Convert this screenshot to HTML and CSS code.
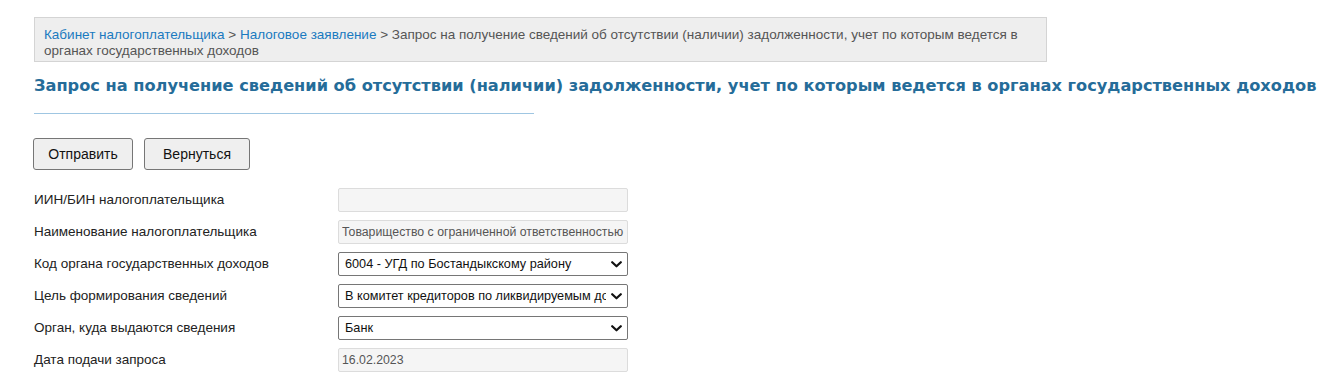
FILE: index.html
```html
<!DOCTYPE html>
<html lang="ru">
<head>
<meta charset="utf-8">
<title>Запрос на получение сведений</title>
<link rel="stylesheet" href="styles.css">
</head>
<body>
<div class="page">
  <div class="breadcrumb">
    <div class="crumb-line"><a href="#">Кабинет налогоплательщика</a> <span>&gt;</span> <a href="#">Налоговое заявление</a> <span>&gt; Запрос на получение сведений об отсутствии (наличии) задолженности, учет по которым ведется в</span></div>
    <div class="crumb-line"><span>органах государственных доходов</span></div>
  </div>
  <h1 class="title">Запрос на получение сведений об отсутствии (наличии) задолженности, учет по которым ведется в органах государственных доходов</h1>
  <div class="divider"></div>
  <div class="actions">
    <button class="btn btn-send" type="button">Отправить</button>
    <button class="btn btn-back" type="button">Вернуться</button>
  </div>
  <div class="form">
    <label class="label">ИИН/БИН налогоплательщика</label>
    <input class="field readonly" type="text" value="" readonly>

    <label class="label">Наименование налогоплательщика</label>
    <input class="field readonly" type="text" value="Товарищество с ограниченной ответственностью" readonly>

    <label class="label">Код органа государственных доходов</label>
    <div class="select-wrap">
      <select class="field select">
        <option>6004 - УГД по Бостандыкскому району</option>
      </select>
      <svg class="chev" width="11" height="7" viewBox="0 0 11 7"><path d="M1.2 1.2 L5.5 5.3 L9.8 1.2" fill="none" stroke="#111" stroke-width="2.2" stroke-linecap="round" stroke-linejoin="round"/></svg>
    </div>

    <label class="label">Цель формирования сведений</label>
    <div class="select-wrap">
      <select class="field select">
        <option>В комитет кредиторов по ликвидируемым должникам</option>
      </select>
      <svg class="chev" width="11" height="7" viewBox="0 0 11 7"><path d="M1.2 1.2 L5.5 5.3 L9.8 1.2" fill="none" stroke="#111" stroke-width="2.2" stroke-linecap="round" stroke-linejoin="round"/></svg>
    </div>

    <label class="label">Орган, куда выдаются сведения</label>
    <div class="select-wrap">
      <select class="field select">
        <option>Банк</option>
      </select>
      <svg class="chev" width="11" height="7" viewBox="0 0 11 7"><path d="M1.2 1.2 L5.5 5.3 L9.8 1.2" fill="none" stroke="#111" stroke-width="2.2" stroke-linecap="round" stroke-linejoin="round"/></svg>
    </div>

    <label class="label">Дата подачи запроса</label>
    <input class="field readonly" type="text" value="16.02.2023" readonly>
  </div>
</div>
</body>
</html>
```

FILE: styles.css
```css
html, body {
  margin: 0;
  padding: 0;
  background: #fff;
}

.page {
  padding: 17px 0 0 34px;
  font-family: "Liberation Sans", Arial, sans-serif;
  color: #222;
}

.breadcrumb {
  box-sizing: border-box;
  width: 1013px;
  height: 45px;
  background: #eeeeee;
  border: 1px solid #d4d4d4;
  padding: 9px 9px 0 9px;
  font-size: 13.5px;
  line-height: 16px;
  color: #555;
}

.crumb-line {
  white-space: nowrap;
}

.breadcrumb a {
  color: #1a7ac0;
  text-decoration: none;
}

.title {
  margin: 14px 0 0 0;
  font-family: "DejaVu Sans", Verdana, sans-serif;
  font-weight: bold;
  font-size: 16.2px;
  line-height: 20px;
  color: #256c99;
  white-space: nowrap;
}

.divider {
  width: 500px;
  height: 1px;
  background: #9fc6e2;
  margin-top: 17px;
}

.actions {
  display: flex;
  gap: 11px;
  margin-top: 24px;
  margin-left: -1px;
}

.btn {
  box-sizing: border-box;
  height: 32px;
  padding: 0;
  font-family: "Liberation Sans", Arial, sans-serif;
  font-size: 14px;
  color: #111;
  background: #efefef;
  border: 1px solid #767676;
  border-radius: 3px;
}

.btn-send {
  width: 100px;
}

.btn-back {
  width: 106px;
}

.form {
  display: grid;
  grid-template-columns: 304px 290px;
  grid-auto-rows: 32px;
  align-items: center;
  margin-top: 14px;
}

.label {
  font-size: 13.5px;
  color: #222;
  margin-top: -2px;
}

.field {
  box-sizing: border-box;
  width: 290px;
  height: 24px;
  font-family: "Liberation Sans", Arial, sans-serif;
  font-size: 12.3px;
  margin: 0;
}

.readonly {
  background: #f5f5f5;
  border: 1px solid #dcdcdc;
  border-radius: 2px;
  padding: 0 3px;
  color: #555;
  outline: none;
}

.select-wrap {
  position: relative;
  width: 290px;
  height: 24px;
}

.select {
  appearance: none;
  -webkit-appearance: none;
  display: block;
  background: #fff;
  border: 1px solid #767676;
  border-radius: 2px;
  padding: 0 21px 0 6px;
  color: #111;
  font-size: 12.7px;
}

.chev {
  position: absolute;
  right: 6px;
  top: 9px;
  pointer-events: none;
}
```
